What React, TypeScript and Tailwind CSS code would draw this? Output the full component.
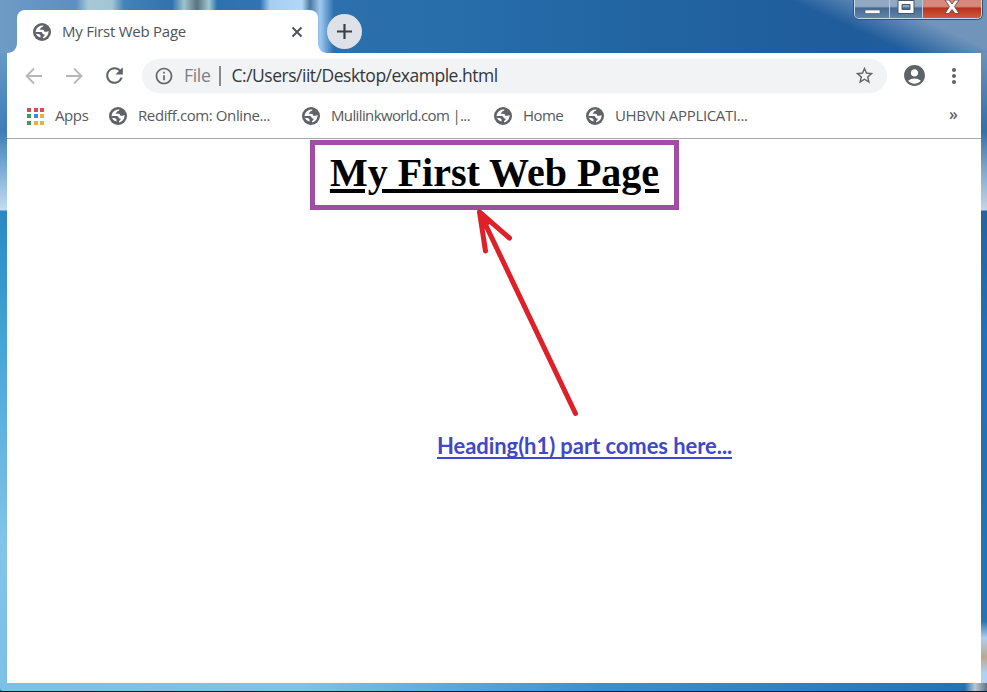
import { ReactNode } from "react";
import { MdAccountCircle, MdInfoOutline, MdMoreVert, MdRefresh, MdStarBorder } from "react-icons/md";

const APP_DOTS = [
  "bg-[#cf5054]", "bg-[#cf5054]", "bg-[#cf5054]",
  "bg-[#3d9b5f]", "bg-[#4484d6]", "bg-[#e3b33d]",
  "bg-[#3d9b5f]", "bg-[#e3b33d]", "bg-[#e3b33d]",
];

function GlobeIcon() {
  return (
    <svg viewBox="0 0 18 18" className="size-[18px] shrink-0">
      <circle cx="9" cy="9" r="9" fill="#5f6368" />
      <path
        d="M10.400 2.600c.1 1.300-.9 1.600-2 1.700-.4 1.200-1.500 1.300-1.800 2.500h2.900c1.400 0 1.700 1 1.800 2h2.100c1 0 1.300-.8 2.100-.8.4 3.600-2 6.700-5.500 7.400v-1.500c1.300-.3 1.900-1.200 1.500-2.400-1.500 0-2-.6-2.200-1.500-.2-.7-.8-1-1.700-1H2.700c.1.900.3 1.400.5 1.900h2.200c1.300 0 1.400 1.100 2.100 1.300v2.200C4 13.700 1.700 10.200 3 6.900c1.200-2.900 4.300-4.700 7.400-4.300z"
        fill="#fff"
      />
    </svg>
  );
}

function ArrowIcon({ className }: { className: string }) {
  return (
    <svg viewBox="0 0 24 24" fill="none" stroke="currentColor" strokeWidth="1.800" className={`size-6 shrink-0 text-[#b5b7b9] ${className}`}>
      <path d="M20 12H4.500M12 4.500L4.500 12l7.500 7.500" />
    </svg>
  );
}

type BookmarkProps = {
  className: string;
  icon?: ReactNode;
  children: ReactNode;
};

function Bookmark({ className, icon, children }: BookmarkProps) {
  return (
    <div className={`flex shrink-0 items-center whitespace-nowrap ${className}`}>
      {icon ?? <GlobeIcon />}
      <span className="pb-0.5">{children}</span>
    </div>
  );
}

function WindowControls() {
  return (
    <div className="mr-[5px] flex h-[19px] w-[128px] shrink-0 overflow-hidden rounded-b-[5px] border border-t-0 border-[#c9d9e8] shadow-[0_0_0_1px_#36516d]">
      <div className="flex w-[35px] justify-center border-r border-[#b7c9da] bg-linear-to-b from-[#91a9c2] from-35% via-[#48698f] via-45% to-[#5f86ad] pt-[9px]">
        <svg width="17" height="6" viewBox="0 0 17 6">
          <rect x="1" y="1" width="15" height="3.500" fill="#fff" stroke="#536477" strokeWidth=".7" />
        </svg>
      </div>
      <div className="flex w-[33px] justify-center border-r border-[#b7c9da] bg-linear-to-b from-[#91a9c2] from-35% via-[#48698f] via-45% to-[#5f86ad]">
        <svg width="18" height="15" viewBox="0 0 18 15">
          <path d="M1 .5h16v13H1zM5 4.500v5h8v-5z" fill="#fff" fillRule="evenodd" stroke="#44566c" strokeWidth="1" />
        </svg>
      </div>
      <div className="flex flex-1 justify-center bg-linear-to-b from-[#d58a7c] from-35% via-[#b92f1c] via-45% to-[#cf5a3d]">
        <svg width="16" height="15" viewBox="0 0 16 15">
          <path d="M1 0h4l3 4 3-4h4l-4.500 6.500L15 13.500h-4l-3-4-3 4H1l4.500-7z" fill="#fff" stroke="#62494e" strokeWidth=".9" />
        </svg>
      </div>
    </div>
  );
}

function TitleBar() {
  return (
    <div className="flex h-[53px] items-start bg-[linear-gradient(24deg,transparent_38%,#7194bb_66%),linear-gradient(90deg,#6f9ac6_0,#5c8fc2_76px,#a7c8d6_88px,#a2c5d5_112px,#4383b9_124px,#2f72ad_172px,#9fc4cc_184px,#5b7380_197px,#9ec8d4_209px,#2d72b0_217px,#3174b3_260px,#a6cdf2_270px,#b4d7f7_302px,#4c789e_310px,#9fcbf2_320px,#2c70ad_334px,#276eab_450px,#2264a2_650px,#1f5c9c_850px,#215f9e_987px)] bg-[size:200px_53px,100%_100%] bg-right bg-no-repeat">
      <svg width="17" height="53" viewBox="0 0 17 53" className="shrink-0">
        <path d="M17 43v10H7c6 0 10-4 10-10z" fill="#fff" />
      </svg>
      <div className="mt-[10px] flex h-[43px] w-[301px] shrink-0 items-center rounded-t-[8px] bg-white pl-4">
        <GlobeIcon />
        <span className="ml-[11px] text-[15px] tracking-[-0.25px] text-[#505357]">My First Web Page</span>
        <svg width="12" height="12" viewBox="0 0 12 12" className="mr-[15px] ml-auto">
          <path d="M1.500 1.500l9 9m0-9l-9 9" stroke="#50545a" strokeWidth="2" />
        </svg>
      </div>
      <svg width="9" height="53" viewBox="0 0 9 53" className="shrink-0">
        <path d="M0 43v10h9C4 53 0 49 0 43z" fill="#fff" />
      </svg>
      <div className="mt-[14px] flex size-[35px] shrink-0 items-center justify-center rounded-full bg-[#dee1e8]">
        <svg width="15" height="15" viewBox="0 0 15 15">
          <path d="M7.500 0v15M0 7.500h15" stroke="#3c4043" strokeWidth="2.200" />
        </svg>
      </div>
      <div className="flex-1" />
      <WindowControls />
    </div>
  );
}

function Toolbar() {
  return (
    <div className="flex h-[45px] items-center pl-[15px] text-[#5f6368]">
      <ArrowIcon className="" />
      <ArrowIcon className="ml-[16px] -scale-x-100" />
      <MdRefresh className="ml-[16px] size-[25px]" />
      <div className="ml-[15px] flex h-[34px] w-[745px] items-center rounded-full bg-[#f1f3f4] pl-[12px] text-[17.500px]">
        <MdInfoOutline className="size-5" />
        <span className="ml-[10px] w-[27px] tracking-[-0.3px] whitespace-nowrap text-[#7b7f83]">File</span>
        <div className="ml-[8px] h-5 w-[1.500px] bg-[#85888c]" />
        <span className="ml-[11px] tracking-[-0.49px] text-[#34373a]">C:/Users/iit/Desktop/example.html</span>
        <MdStarBorder className="mr-[12px] ml-auto size-[21px]" />
      </div>
      <MdAccountCircle className="ml-[15px] size-[25px]" />
      <MdMoreVert className="ml-[15px] size-6" />
    </div>
  );
}

function BookmarksBar() {
  const appsIcon = (
    <div className="grid shrink-0 grid-cols-3 gap-[2.500px]">
      {APP_DOTS.map((color, i) => (
        <div key={i} className={`size-1 ${color}`} />
      ))}
    </div>
  );

  return (
    <div className="flex h-[41px] items-center border-b border-[#a9a9ad] pr-[23px] pb-[4px] pl-5 text-[15px] text-[#56595d]">
      <Bookmark className="w-[82px] gap-[11px] tracking-[-0.4px]" icon={appsIcon}>Apps</Bookmark>
      <Bookmark className="w-[193px] gap-[11px] tracking-[-0.4px]">Rediff.com: Online...</Bookmark>
      <Bookmark className="w-[192px] gap-[11px] tracking-[-0.62px]">Mulilinkworld.com |...</Bookmark>
      <Bookmark className="w-[92px] gap-[11px] tracking-[-0.6px]">Home</Bookmark>
      <Bookmark className="w-[180px] gap-[11px] tracking-[-0.33px]">UHBVN APPLICATI...</Bookmark>
      <span className="ml-auto pb-1 text-[16px] font-semibold text-[#5f6368]">»</span>
    </div>
  );
}

function PageContent() {
  return (
    <main className="relative flex flex-1 flex-col bg-white">
      <div className="mt-px ml-[303px] flex h-[70px] w-[369px] justify-center border-[5px] border-[#a04da3]">
        <h1 className="font-['Liberation_Serif',serif] text-[40px] leading-[56px] font-bold whitespace-nowrap text-black underline decoration-[4px] underline-offset-[3px]">
          My First Web Page
        </h1>
      </div>
      <p className="mt-[225px] ml-[430px] w-fit border-b-2 border-[#3f48c8] font-['Lato',sans-serif] text-[22px] leading-[22px] font-bold tracking-[-0.07px] whitespace-nowrap text-[#3f48c8]">
        Heading(h1) part comes here...
      </p>
      <svg width="110" height="215" viewBox="0 0 110 215" className="absolute top-[70px] left-[465px]">
        <path d="M103.500 204.500L7.500 3M13.500 42L7.500 3L37.500 29" fill="none" stroke="#df2029" strokeWidth="5" strokeLinecap="round" strokeLinejoin="round" />
        <path d="M6 1l14 12-5 4-6-2z" fill="#df2029" />
      </svg>
    </main>
  );
}

export default function App() {
  return (
    <div className="flex h-[692px] w-[987px] flex-col overflow-hidden bg-[#2674b5] font-['Open_Sans',sans-serif]">
      <TitleBar />
      <div className="flex h-[630px]">
        <div className="w-[7px] shrink-0 bg-[linear-gradient(180deg,#6699c8_0,#3e7db5_78px,#70a4d2_110px,#c4ddf2_157px,#2b86c2_158px,#43a2d5_280px,#82c4ea_490px,#7cbfe7_630px)]" />
        <div className="flex w-[974px] shrink-0 flex-col bg-white">
          <Toolbar />
          <BookmarksBar />
          <PageContent />
        </div>
        <div className="w-[6px] shrink-0 bg-[linear-gradient(180deg,#6c91b9_0,#366fa5_78px,#7fa4ca_115px,#c2d6e8_157px,#27639c_158px,#2670b5_280px,#2873b0_568px,#adcff0_585px,#b9a991_604px,#b0d2f2_620px)]" />
      </div>
      <div className="h-[8px] rounded-b-[3px] bg-[linear-gradient(90deg,#7cbfe7_0,#80c2e8_300px,#3d8fcb_600px,#2673b4_965px,#b5c8d8_975px,#65747f_987px)]" />
      <div className="h-px bg-[#101a22]" />
    </div>
  );
}
